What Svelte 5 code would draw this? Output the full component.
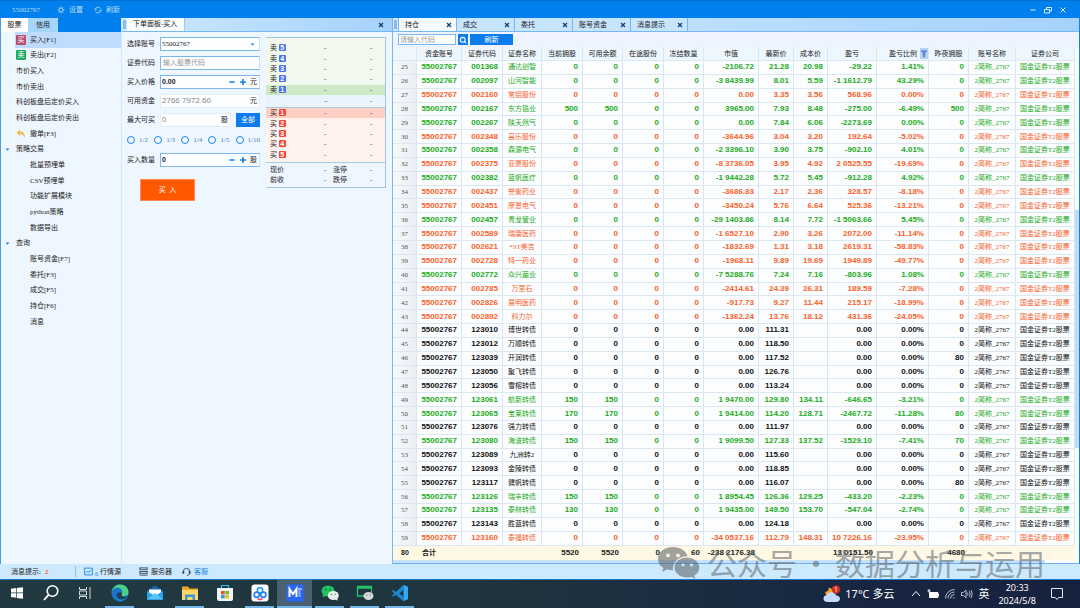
<script lang="ts">
	const account = '55002767';

	// sidebar tree; group = expandable heading, child = indented entry
	const menu = [
		{ text: '买入[F1]', badge: '买', kind: 'red', active: true },
		{ text: '卖出[F2]', badge: '卖', kind: 'green' },
		{ text: '市价买入' },
		{ text: '市价卖出' },
		{ text: '科创板盘后定价买入' },
		{ text: '科创板盘后定价卖出' },
		{ text: '撤单[F3]', undo: true },
		{ text: '策略交易', group: true },
		{ text: '批量预埋单', child: true },
		{ text: 'CSV预埋单', child: true },
		{ text: '功能扩展模块', child: true },
		{ text: 'python策略', child: true },
		{ text: '数据导出', child: true },
		{ text: '查询', group: true },
		{ text: '账号资金[F7]', child: true },
		{ text: '委托[F3]', child: true },
		{ text: '成交[F5]', child: true },
		{ text: '持仓[F6]', child: true },
		{ text: '消息', child: true },
	];

	const tabs = ['持仓', '成交', '委托', '账号资金', '消息提示'];
	const ratios = ['1/2', '1/3', '1/4', '1/5', '1/10'];
	const asks = [5, 4, 3, 2, 1];
	const bids = [1, 2, 3, 4, 5];

	const columns = [
		{ name: '', w: 24 },
		{ name: '资金账号', w: 45 },
		{ name: '证券代码', w: 41 },
		{ name: '证券名称', w: 39 },
		{ name: '当前拥股', w: 41 },
		{ name: '可用余额', w: 40 },
		{ name: '在途股份', w: 41 },
		{ name: '冻结数量', w: 40 },
		{ name: '市值', w: 55 },
		{ name: '最新价', w: 35 },
		{ name: '成本价', w: 34 },
		{ name: '盈亏', w: 49 },
		{ name: '盈亏比例', w: 52, filter: true },
		{ name: '昨夜拥股', w: 40 },
		{ name: '账号名称', w: 47 },
		{ name: '证券公司', w: 59 },
	];
	const totalWidth = columns.reduce((s, c) => s + c.w, 0);

	// colour (g/r/k), code, name, shares, market value, last, cost, profit, ratio, overnight
	const holdings = [
		['g', '001368', '通达创智', '0', '-2106.72', '21.28', '20.98', '-29.22', '1.41%', '0'],
		['g', '002097', '山河智能', '0', '-3 8439.99', '8.01', '5.59', '-1 1612.79', '43.29%', '0'],
		['r', '002160', '常铝股份', '0', '0.00', '3.35', '3.56', '568.96', '0.00%', '0'],
		['g', '002167', '东方锆业', '500', '3965.00', '7.93', '8.48', '-275.00', '-6.49%', '500'],
		['g', '002267', '陕天然气', '0', '0.00', '7.84', '6.06', '-2273.69', '0.00%', '0'],
		['r', '002348', '高乐股份', '0', '-3644.96', '3.04', '3.20', '192.64', '-5.02%', '0'],
		['g', '002358', '森源电气', '0', '-2 3396.10', '3.90', '3.75', '-902.10', '4.01%', '0'],
		['r', '002375', '亚厦股份', '0', '-8 3736.05', '3.95', '4.92', '2 0525.55', '-19.69%', '0'],
		['g', '002382', '蓝帆医疗', '0', '-1 9442.28', '5.72', '5.45', '-912.28', '4.92%', '0'],
		['r', '002437', '誉衡药业', '0', '-3686.83', '2.17', '2.36', '328.57', '-8.18%', '0'],
		['r', '002451', '摩恩电气', '0', '-3450.24', '5.76', '6.64', '525.36', '-13.21%', '0'],
		['g', '002457', '青龙管业', '0', '-29 1403.86', '8.14', '7.72', '-1 5063.66', '5.45%', '0'],
		['r', '002589', '瑞康医药', '0', '-1 6527.10', '2.90', '3.26', '2072.00', '-11.14%', '0'],
		['r', '002621', '*ST美吉', '0', '-1832.69', '1.31', '3.18', '2619.31', '-58.83%', '0'],
		['r', '002728', '特一药业', '0', '-1968.11', '9.89', '19.69', '1949.89', '-49.77%', '0'],
		['g', '002772', '众兴菌业', '0', '-7 5288.76', '7.24', '7.16', '-803.96', '1.08%', '0'],
		['r', '002785', '万里石', '0', '-2414.61', '24.39', '26.31', '189.59', '-7.28%', '0'],
		['r', '002826', '易明医药', '0', '-917.73', '9.27', '11.44', '215.17', '-18.99%', '0'],
		['r', '002892', '科力尔', '0', '-1362.24', '13.76', '18.12', '431.36', '-24.05%', '0'],
		['k', '123010', '博世转债', '0', '0.00', '111.31', '', '0.00', '0.00%', '0'],
		['k', '123012', '万顺转债', '0', '0.00', '118.50', '', '0.00', '0.00%', '0'],
		['k', '123039', '开润转债', '0', '0.00', '117.52', '', '0.00', '0.00%', '80'],
		['k', '123050', '聚飞转债', '0', '0.00', '126.76', '', '0.00', '0.00%', '0'],
		['k', '123056', '雪榕转债', '0', '0.00', '113.24', '', '0.00', '0.00%', '0'],
		['g', '123061', '航新转债', '150', '1 9470.00', '129.80', '134.11', '-646.65', '-3.21%', '0'],
		['g', '123065', '宝莱转债', '170', '1 9414.00', '114.20', '128.71', '-2467.72', '-11.28%', '80'],
		['k', '123076', '强力转债', '0', '0.00', '111.97', '', '0.00', '0.00%', '0'],
		['g', '123080', '海波转债', '150', '1 9099.50', '127.33', '137.52', '-1529.10', '-7.41%', '70'],
		['k', '123089', '九洲转2', '0', '0.00', '115.60', '', '0.00', '0.00%', '0'],
		['k', '123093', '金陵转债', '0', '0.00', '118.85', '', '0.00', '0.00%', '0'],
		['k', '123117', '健帆转债', '0', '0.00', '116.07', '', '0.00', '0.00%', '80'],
		['g', '123126', '瑞丰转债', '150', '1 8954.45', '126.36', '129.25', '-433.20', '-2.23%', '0'],
		['g', '123135', '泰林转债', '130', '1 9435.00', '149.50', '153.70', '-547.04', '-2.74%', '0'],
		['k', '123143', '胜蓝转债', '0', '0.00', '124.18', '', '0.00', '0.00%', '0'],
		['r', '123160', '泰福转债', '0', '-34 0537.16', '112.79', '148.31', '10 7226.16', '-23.95%', '0'],
	];
	const firstRow = 25;
</script>

{#snippet stepper(id, value, unit)}
	<div class="field">
		<input {id} class="strong" type="text" {value} />
		<button type="button" class="step" aria-label="减少"><svg viewBox="0 0 8 8"><path d="M1.5 4h5" /></svg></button>
		<button type="button" class="step" aria-label="增加"><svg viewBox="0 0 8 8"><path d="M1 4h6M4 1v6" /></svg></button>
		<span class="unit">{unit}</span>
	</div>
{/snippet}

<div class="screen">
	<header class="titlebar">
		<span class="user">{account}</span>
		<button class="tool">
			<svg viewBox="0 0 12 12"><circle cx="6" cy="6" r="3" /><path d="M6 0.8v2M6 9.2v2M0.8 6h2M9.2 6h2M2.3 2.3l1.5 1.5M8.2 8.2l1.5 1.5M9.7 2.3L8.2 3.8M3.8 8.2L2.3 9.7" /></svg>
			设置
		</button>
		<button class="tool">
			<svg viewBox="0 0 12 12"><path d="M2 5a4.3 4.3 0 0 1 8-1M10 7a4.3 4.3 0 0 1-8 1M0 6.3L2 4.5l2 1.8M12 5.700L10 7.500 8 5.700" /></svg>
			刷新
		</button>
		<div class="window-controls">
			<button aria-label="最小化"><svg viewBox="0 0 8 8"><path d="M1.5 4h5" /></svg></button>
			<button aria-label="还原"><svg viewBox="0 0 8 8"><path d="M0.5 3.5h5v3.5h-5zM2.5 3.5v-2h5v3.5h-2" /></svg></button>
			<button aria-label="关闭"><svg viewBox="0 0 8 8"><path d="M1.5 1.5l5 5M6.5 1.5l-5 5" /></svg></button>
		</div>
	</header>

	<main class="workspace">
		<nav class="sidebar">
			<div class="side-tabs">
				<button class="side-tab on">股票</button>
				<button class="side-tab">信用</button>
			</div>
			<ul class="tree">
				{#each menu as item}
					<li class:active={item.active} class:child={item.child} class:group={item.group}>
						{#if item.group}
							<svg class="caret" viewBox="0 0 6 4"><path d="M0.5 0.5h5L3 3.5z" /></svg>
						{/if}
						<a href="#menu">
							{#if item.badge}<span class="badge {item.kind}">{item.badge}</span>{/if}
							{#if item.undo}
								<svg class="undo" viewBox="0 0 10 10"><path d="M0.5 3.5L4 0.5v2c4 0 5.5 3 4.5 6.5C8 6.5 6.5 5 4 5v2z" /></svg>
							{/if}
							{item.text}
						</a>
					</li>
				{/each}
			</ul>
		</nav>

		<section class="order">
			<div class="strip">
				<span class="grip"></span>
				<span class="order-tab">下单面板-买入</span>
				<button class="close" aria-label="关闭面板"><svg viewBox="0 0 6 6"><path d="M1 1l4 4M5 1L1 5" /></svg></button>
			</div>
			<div class="order-body">
				<form class="form" onsubmit={(e) => e.preventDefault()}>
					<div class="row">
						<label for="acct">选择账号</label>
						<div class="field">
							<select id="acct"><option>{account}</option></select>
							<svg class="caret" viewBox="0 0 6 4"><path d="M0.5 0.5h5L3 3.5z" /></svg>
						</div>
					</div>
					<div class="row">
						<label for="code">证券代码</label>
						<div class="field"><input id="code" type="text" placeholder="输入股票代码" /></div>
					</div>
					<div class="row">
						<label for="price">买入价格</label>
						{@render stepper('price', '0.00', '元')}
					</div>
					<div class="row">
						<label for="cash">可用资金</label>
						<div class="field plain"><input id="cash" class="cash" type="text" value="2766 7972.60" readonly /><span class="unit">元</span></div>
					</div>
					<div class="row">
						<label for="max">最大可买</label>
						<div class="field plain"><input id="max" class="cash" type="text" value="0" readonly /><span class="unit">股</span></div>
						<button type="button" class="all">全部</button>
					</div>
					<div class="ratios">
						{#each ratios as r}
							<label><input type="radio" name="ratio" value={r} />{r}</label>
						{/each}
					</div>
					<div class="row">
						<label for="qty">买入数量</label>
						{@render stepper('qty', '0', '股')}
					</div>
					<button class="buy" type="submit">买 &nbsp;入</button>
				</form>

				<table class="depth">
					<tbody class="asks">
						{#each asks as n}
							<tr class:best={n === 1}><td>卖 <b>{n}</b></td><td>-</td><td></td><td>-</td></tr>
						{/each}
					</tbody>
					<tbody class="last">
						<tr><td></td><td>–</td><td></td><td>-</td></tr>
					</tbody>
					<tbody class="bids">
						{#each bids as n}
							<tr class:best={n === 1}><td>买 <b>{n}</b></td><td>-</td><td></td><td>-</td></tr>
						{/each}
					</tbody>
					<tbody class="quote">
						<tr><td>现价</td><td>-</td><td>涨停</td><td>-</td></tr>
						<tr><td>前收</td><td>-</td><td>跌停</td><td>-</td></tr>
					</tbody>
				</table>
			</div>
		</section>

		<section class="positions">
			<div class="strip">
				<span class="grip"></span>
				{#each tabs as tab, i}
					<div class="tab" class:on={i === 0}>
						<button>{tab}</button>
						<button class="close" aria-label="关闭{tab}"><svg viewBox="0 0 6 6"><path d="M1 1l4 4M5 1L1 5" /></svg></button>
					</div>
				{/each}
			</div>
			<div class="toolbar">
				<input type="text" placeholder="请输入代码" aria-label="代码" />
				<button class="search" aria-label="搜索"><svg viewBox="0 0 10 10"><circle cx="4.7" cy="4.7" r="3" /><path d="M7 7l2 2" /></svg></button>
				<button class="refresh">刷新</button>
			</div>
			<div class="grid-area">
				<table class="grid">
					<colgroup>
						{#each columns as col}
							<col style="width: {(col.w / totalWidth) * 100}%" />
						{/each}
					</colgroup>
					<thead>
						<tr>
							{#each columns as col}
								<th>
									{#if col.filter}
										<span class="filtered">{col.name}<svg viewBox="0 0 9 12"><path d="M1.5 3h6L5.3 6v4L3.7 9V6z" /></svg></span>
									{:else}
										{col.name}
									{/if}
								</th>
							{/each}
						</tr>
					</thead>
					<tbody>
						{#each holdings as [tone, code, name, shares, value, last, cost, profit, ratio, night], i}
							<tr class={tone}>
								<td class="idx">{firstRow + i}</td>
								<td class="num">{account}</td>
								<td class="num">{code}</td>
								<td>{name}</td>
								<td class="num">{shares}</td>
								<td class="num">{shares}</td>
								<td class="num">0</td>
								<td class="num">0</td>
								<td class="num">{value}</td>
								<td class="num">{last}</td>
								<td class="num">{cost}</td>
								<td class="num">{profit}</td>
								<td class="num">{ratio}</td>
								<td class="num">{night}</td>
								<td>2简称_2767</td>
								<td>国金证券T2股票</td>
							</tr>
						{/each}
					</tbody>
					<tfoot>
						<tr>
							<td class="sum-idx">80</td>
							<td class="sum-name">合计</td>
							<td></td>
							<td></td>
							<td class="num">5520</td>
							<td class="num">5520</td>
							<td class="num">0</td>
							<td class="num">60</td>
							<td class="num">-238 2176.38</td>
							<td></td>
							<td></td>
							<td class="num">13 0151.50</td>
							<td></td>
							<td class="num">4680</td>
							<td></td>
							<td></td>
						</tr>
					</tfoot>
				</table>
				<div class="vbar"><span></span></div>
			</div>
			<div class="hbar"><span></span></div>
		</section>
	</main>

	<footer class="status">
		<span class="notice">消息提示: <em>2</em></span>
		<span class="sep"></span>
		<span class="item source">
			<svg viewBox="0 0 10 10"><path class="blue" d="M0.7 1.2h8.6v7.6H0.7zM2 6.500l2-2 1.500 1.500L8.300 3" /></svg>
			<sub>6</sub>行情源
		</span>
		<span class="item server">
			<svg viewBox="0 0 10 10"><path d="M0.5 1h9M0.5 3h9M0.5 5h9M0.5 7h9M0.5 9h9M1 1v2M9 1v2M1 5v2M9 5v2" /></svg>
			服务器
		</span>
		<a class="item help" href="#help">
			<svg viewBox="0 0 10 10"><path d="M1.5 6.5V5a3.5 3.5 0 0 1 7 0v1.5M8.5 7.5Q8 9.3 5.5 9.3" /><path class="ear" d="M1.5 4.5v3M8.5 4.5v3" /></svg>
			客服
		</a>
	</footer>

	<div class="watermark">
		<svg viewBox="0 0 44 34">
			<path fill-rule="evenodd" d="M16 2C7 2 1 7.5 1 14c0 4 2 7 5.5 9L5 27l5-2.5c2 .6 4 .8 6 .7-1-8 6-14 14.5-14C29 5.5 23 2 16 2zM11 8.5a1.900 1.900 0 1 1 0 3.800 1.900 1.900 0 0 1 0-3.800zM21 8.500a1.900 1.900 0 1 1 0 3.800 1.900 1.900 0 0 1 0-3.800z" />
			<path fill-rule="evenodd" d="M30 12.5c-7 0-12.5 4.5-12.5 10S23 32.5 30 32.5c1.5 0 3-.2 4.3-.6l4.200 2.100-1.200-3.500c3-1.800 5-4.700 5-8 0-5.500-5.500-10-12.300-10zM26 18.200a1.600 1.600 0 1 1 0 3.200 1.600 1.600 0 0 1 0-3.200zM34.500 18.200a1.600 1.600 0 1 1 0 3.200 1.600 1.600 0 0 1 0-3.200z" />
		</svg>
		<span>公众号</span><span class="dot">·</span><span>数据分析与运用</span>
	</div>

	<div class="taskbar">
		<div class="apps">
			<button class="system" aria-label="开始"><svg viewBox="0 0 18 18"><path fill="#fff" d="M3 4.8l5-.7v4.5H3zM8.7 4L15 3.2v5.4H8.700zM3 9.300h5v4.500l-5-.7zM8.700 9.300H15v5.500L8.700 14z" /></svg></button>
			<button class="system" aria-label="搜索"><svg viewBox="0 0 18 18"><circle cx="10.5" cy="7" r="5.3" fill="none" stroke="#fff" stroke-width="1.6" /><path d="M6.6 10.8L2 16" stroke="#fff" stroke-width="1.8" /></svg></button>
			<button class="system" aria-label="任务视图"><svg viewBox="0 0 18 18"><path d="M3.5 3v2.5h7V3M3.5 15v-2.5h7V15M3.5 7h7v4h-7zM14 3v2M14 7v8M13 6h2" fill="none" stroke="#d5dadd" /></svg></button>
			<button class="run" aria-label="Edge">
				<svg viewBox="0 0 18 18"><circle cx="9" cy="9" r="8.5" fill="#1688d5" /><path d="M.6 8C1.5 3 5 .5 9 .5c5 0 8.5 3.5 8.5 7.5 0 3-2.5 4.5-5 4.5-1.5 0-2.5-.6-2-1.3C12 8.5 10 5.5 6.5 5.5 3.5 5.5 1.5 6.5.6 8z" fill="#4bd087" /><path d="M.6 8C2 4 5 3.5 7 3.7 10.5 4 12 7 11 9.5c-1-2-5-2-5.5 1.5-.4 3 2 6 5.5 6.2C5 18.5.5 14 .6 8z" fill="#1a75c8" /><path d="M5.5 11c.5-3.500 4.500-3.500 5.500-1.500-.8 1.500-.3 3 1.500 3 1.600 0 3-.5 3.700-1.100-1.500 5-9.700 6-10.700-.4z" fill="#203e58" /></svg>
			</button>
			<button aria-label="邮件"><svg viewBox="0 0 18 18"><path fill="#1268b3" d="M1 7l8-5.5L17 7v8.5H1z" /><path fill="#fff" d="M3 5.5h12v6H3z" /><path fill="#2aa4ec" d="M1 7l8 5 8-5v8.5H1z" /><path fill="#56c5fa" d="M1 15.5L9 9l8 6.5z" /></svg></button>
			<button class="run" aria-label="文件"><svg viewBox="0 0 18 18"><path fill="#e8a826" d="M1 2.5h6l1.5 2H17V16H1z" /><path fill="#ffd766" d="M1 6h16v10H1z" /><path fill="#3c95dd" d="M4 16v-5.5h10V16h-2.5v-3h-5v3z" /></svg></button>
			<button aria-label="商店"><svg viewBox="0 0 18 18"><path d="M5.5 5V1.5h7V5" fill="none" stroke="#3dbaf0" stroke-width="1.2" /><path fill="#f3f5f6" d="M1 4h16v11q0 2-2 2H3q-2 0-2-2z" /><path fill="#e8522d" d="M5 7h3.7v3.4H5z" /><path fill="#72b92c" d="M9.3 7H13v3.4H9.3z" /><path fill="#2c9be0" d="M5 11h3.7v3.4H5z" /><path fill="#f7ba20" d="M9.3 11H13v3.4H9.3z" /></svg></button>
			<button class="run" aria-label="网盘"><svg viewBox="0 0 18 18"><rect x="0.5" y="0.5" width="17" height="17" rx="3" fill="#fff" /><g fill="none" stroke-width="1.7"><circle cx="9" cy="6.3" r="2.7" stroke="#2b9df4" /><circle cx="5.7" cy="10.8" r="2.6" stroke="#2583f0" /><circle cx="12.3" cy="10.8" r="2.6" stroke="#2583f0" /><path d="M6.5 14.700L9 15.500l2.500-.8" stroke="#f04c64" /></g></svg></button>
			<button class="run front" aria-label="MT"><svg viewBox="0 0 18 18"><rect x="0.5" y="0.5" width="17" height="17" rx="1" fill="#2b66f4" /><path d="M3.5 13V5l3.500 5 3.500-5v8" fill="none" stroke="#fff" stroke-width="2" /><path d="M11 5h5M13.5 5v8" stroke="#8db3fb" stroke-width="1.8" /></svg></button>
			<button class="run" aria-label="微信"><svg viewBox="0 0 18 18"><ellipse cx="7" cy="7" rx="6.5" ry="5.5" fill="#20c55f" /><path d="M2 10l-.5 3L5 12z" fill="#20c55f" /><ellipse cx="12.3" cy="11.5" rx="5.5" ry="4.6" fill="#e9ecec" /><path d="M14 15l2.5 1.700V14z" fill="#e9ecec" /><g fill="#185d36"><circle cx="4.8" cy="5.5" r=".8" /><circle cx="9" cy="5.5" r=".8" /><circle cx="10.5" cy="10.3" r=".6" /><circle cx="14" cy="10.3" r=".6" /></g></svg></button>
			<button class="run" aria-label="小程序"><svg viewBox="0 0 18 18"><path d="M1.5 2.5h14V12h-14zM1 4h15" fill="none" stroke="#25c268" stroke-width="1.3" /><ellipse cx="12.5" cy="12" rx="5" ry="4" fill="#d6dadb" /><g fill="#69777c"><circle cx="10.7" cy="11" r=".7" /><circle cx="14.2" cy="11" r=".7" /></g></svg></button>
			<button class="run" aria-label="VS Code"><svg viewBox="0 0 18 18"><path fill="#1b87d2" d="M12.5.8L4.8 8 2.2 6 .8 7l2.7 2.4L.8 11.7l1.4 1 2.6-2 7.7 6.5V12.5L8.2 9.400l4.300-3.300z" /><path fill="#35a9f1" d="M12.5.8l4.5 2v12.5l-4.5 2z" /></svg></button>
		</div>
		<div class="tray">
			<div class="forecast">
				<svg viewBox="0 0 18 18"><path fill="#f5a623" d="M2 7l3-1 1-3.5L9 4l4-1-1 8-8 2z" /><path fill="#c3dbff" d="M4.5 17C2 17 .5 15.5.5 13.5S2 10.3 4 10.3C4.7 8 6.5 7 8.5 7c2.600 0 4 1.500 4.500 3.500 2.500 0 4 1.300 4 3.200S15.500 17 13 17z" /><circle cx="13" cy="4.5" r="4.2" fill="#d52e22" /><text x="13" y="7" text-anchor="middle">1</text></svg>
				<span>17°C 多云</span>
			</div>
			<svg class="ico" viewBox="0 0 12 12"><path d="M2 8l4-4.5L10 8" /></svg>
			<svg class="ico" viewBox="0 0 12 12"><path d="M2.5 4.5h8.5v5H2.5z" fill="#fff" /><path d="M2 1v3.5M0.5 3h3M11.5 6v2" /></svg>
			<svg class="ico dim" viewBox="0 0 12 12"><path d="M1.5 10.5A9 9 0 0 1 10.5 1.5M4 10.5A6.5 6.5 0 0 1 10.5 4M6.5 10.5A4 4 0 0 1 10.5 6.5M9 10.5l1.500-1.500" /></svg>
			<svg class="ico dim" viewBox="0 0 12 12"><path d="M0.5 4.5h2L5 2v8L2.5 7.5h-2zM6.5 4.5q1 1.500 0 3M8.300 3.200q1.800 2.800 0 5.600M10 2q2.500 4 0 8" /></svg>
			<span class="ime">英</span>
			<div class="clock"><span>20:33</span><span>2024/5/8</span></div>
			<svg class="notes" viewBox="0 0 14 14"><path d="M1.5 1.5h11v9H8.7L7 12.5l-1.7-2H1.5z" /></svg>
		</div>
	</div>
</div>

<style>
	:global(body) {
		margin: 0;
	}

	.screen {
		position: relative;
		display: grid;
		grid-template-rows: 18px minmax(0, 1fr) 16px 28px;
		height: 100vh;
		overflow: hidden;
		background: #eef6ff;
		color: #222;
		font-family: "Liberation Serif", "Noto Sans CJK SC", sans-serif;
		font-size: 7px;
		line-height: 10px;
	}

	button, input, select {
		font: inherit;
		color: inherit;
		margin: 0;
		padding: 0;
		border: 0;
		background: none;
		border-radius: 0;
		outline: none;
		box-sizing: border-box;
		min-width: 0;
	}

	a {
		color: inherit;
		text-decoration: none;
	}

	svg {
		display: block;
		fill: none;
		flex: none;
	}

	/* title bar */
	.titlebar {
		display: flex;
		align-items: center;
		gap: 11px;
		padding: 0 13px 0 12px;
		background: #0080ec;
		border-top: 1px solid #0070d0;
		box-sizing: border-box;
		color: #b9defc;
	}
	.user { margin-right: 6px; }
	.tool {
		display: flex;
		align-items: center;
		gap: 4px;
	}
	.tool svg {
		width: 8px;
		height: 8px;
		stroke: #b9defc;
		stroke-width: 1.3;
	}
	.window-controls {
		display: flex;
		gap: 7px;
		margin-left: auto;
	}
	.window-controls svg {
		width: 8px;
		height: 8px;
		stroke: #d8edff;
	}

	/* three panes */
	.workspace {
		display: grid;
		grid-template-columns: 121px 271px minmax(0, 1fr);
		min-height: 0;
		border-left: 1px solid #4d9be6;
		border-right: 1px solid #1683de;
	}

	.sidebar {
		display: flex;
		flex-direction: column;
		border-right: 1px solid #d0e8fb;
		min-height: 0;
	}
	.side-tabs {
		display: flex;
		height: 14px;
		background: #0080ec;
	}
	.side-tab {
		width: 30px;
		background: #a6d5fc;
	}
	.side-tab.on {
		width: 27px;
		background: #fff;
	}
	.tree {
		display: grid;
		grid-auto-rows: minmax(0, 1fr);
		height: 54.5%;
		margin: 0;
		padding: 0;
		list-style: none;
	}
	.tree li {
		display: flex;
		align-items: center;
		margin-left: 14px;
		padding-left: 1px;
	}
	.tree li.child { padding-left: 15px; }
	.tree li.group {
		margin-left: 4px;
		padding-left: 0;
		gap: 6px;
	}
	.tree li.active { background: #bfdcff; }
	.tree a {
		display: flex;
		align-items: center;
		gap: 4px;
		white-space: nowrap;
	}
	.caret {
		width: 5px;
		height: 3px;
		fill: #0f7fe8;
	}
	.badge {
		width: 10px;
		line-height: 10px;
		border-radius: 1px;
		color: #fff;
		text-align: center;
	}
	.badge.red { background: #b5506c; }
	.badge.green { background: #1aab62; }
	.undo {
		width: 10px;
		height: 10px;
		fill: #ecc050;
	}

	/* shared tab strip */
	.strip {
		display: flex;
		height: 14px;
		box-sizing: border-box;
		background: linear-gradient(90deg, #cfe9ff, #a5d2fd);
		border-bottom: 1px solid #76b8f5;
	}
	.grip {
		width: 3px;
		margin: 2px 1px;
		background: #86bdef;
	}
	.close svg {
		width: 6px;
		height: 6px;
		stroke: #123f78;
		stroke-width: 1.3;
	}

	.order {
		border-right: 1px solid #76b8f5;
		min-width: 0;
	}
	.order-tab {
		padding: 1px 7px 0 6px;
		background: #f8fcff;
		border-right: 1px solid #9fcbf0;
		white-space: nowrap;
	}
	.order .close {
		margin-left: auto;
		padding-right: 8px;
	}
	.order-body {
		display: grid;
		grid-template-columns: 133px 120px;
		gap: 6px;
		align-items: start;
		padding: 5px 5px 0;
	}
	.form {
		display: grid;
		gap: 5px;
	}
	.row {
		display: flex;
		align-items: center;
		gap: 5px;
		height: 14px;
	}
	.row label {
		width: 28px;
		flex: none;
		white-space: nowrap;
	}
	.field {
		position: relative;
		display: flex;
		align-items: center;
		flex: 1;
		height: 14px;
		box-sizing: border-box;
		background: #fcfeff;
		border: 1px solid #7db7f0;
		border-right-color: #c9e0f5;
		min-width: 0;
	}
	.field.plain { border-color: #e3eef6; }
	.field input, .field select {
		flex: 1;
		width: 100%;
		padding-left: 1px;
		appearance: none;
	}
	.field input::placeholder {
		color: #999;
		padding-left: 1px;
	}
	.field .caret {
		position: absolute;
		right: 4px;
		pointer-events: none;
	}
	.field .strong, .field .cash {
		font-family: "Liberation Sans", sans-serif;
	}
	.field .strong { font-weight: bold; }
	.plain input { color: #888; }
	.field .cash { font-size: 8px; }
	.step { margin-right: 3px; }
	.step svg {
		width: 8px;
		height: 8px;
		stroke: #0f7fe8;
		stroke-width: 1.6;
	}
	.unit { padding-right: 2px; }
	.all {
		width: 24px;
		height: 14px;
		background: #0b7cec;
		color: #fff;
	}
	.ratios {
		display: flex;
		align-items: center;
		justify-content: space-between;
		height: 16px;
		color: #4c86b8;
	}
	.ratios label {
		display: flex;
		align-items: center;
		gap: 4px;
	}
	.ratios input {
		width: 8px;
		height: 8px;
		appearance: none;
		border: 1px solid #1f86e6;
		border-radius: 50%;
	}
	.buy {
		justify-self: start;
		width: 55px;
		height: 22px;
		margin: 7px 0 0 13px;
		background: #ff5800;
		border: 1px solid #ff8b52;
		color: #fff;
	}

	/* five-level depth */
	.depth {
		display: block;
		box-sizing: border-box;
		border: 1px solid #9dc5e3;
		border-left: 0;
	}
	.depth tbody { display: grid; }
	.depth tr {
		display: grid;
		grid-template-columns: 54px 9px 37px 1fr;
		align-items: center;
		padding-left: 4px;
	}
	.depth td { padding: 0; }
	.depth b {
		display: inline-block;
		width: 7px;
		line-height: 7px;
		border-radius: 1px;
		color: #fff;
		font-family: "Liberation Sans", sans-serif;
		text-align: center;
	}
	.asks, .bids { grid-template-rows: repeat(5, 1fr); }
	.asks {
		height: 52px;
		padding-top: 5px;
		background: #f1f9ee;
	}
	.asks b { background: #4f74f5; }
	.asks .best { background: #cde9c5; }
	.last {
		height: 12px;
		background: #e9f4fc;
	}
	.bids {
		height: 52px;
		padding-bottom: 2px;
		background: #fff1ec;
		border-top: 1px solid #a5cde5;
		border-bottom: 1px solid #a5cde5;
	}
	.bids b { background: #f74838; }
	.bids .best { background: #ffcfc3; }
	.quote { padding: 2px 0; }

	/* positions */
	.positions {
		display: flex;
		flex-direction: column;
		min-width: 0;
		min-height: 0;
		background: #fbfdff;
		border-bottom: 1px solid #6cb0f5;
	}
	.tab {
		display: flex;
		justify-content: space-between;
		align-items: center;
		width: 58px;
		box-sizing: border-box;
		padding: 0 4px 0 6px;
		background: #c8e5fe;
		border-left: 1px solid #76b8f5;
	}
	.tab:last-child { border-right: 1px solid #76b8f5; }
	.tab.on { background: #f5faff; }
	.toolbar {
		display: flex;
		gap: 2px;
		height: 15px;
		box-sizing: border-box;
		padding: 2px 5px;
		background: #eef3ff;
	}
	.toolbar input {
		width: 58px;
		padding-left: 1px;
		background: #fff;
		border: 1px solid #76b8f5;
	}
	.toolbar input::placeholder { color: #999; }
	.search {
		width: 10px;
		padding: 1px;
		background: #0b7cec;
	}
	.search svg {
		width: 8px;
		height: 8px;
		stroke: #fff;
		stroke-width: 1.3;
	}
	.refresh {
		width: 43px;
		background: #0b7cec;
		color: #fff;
	}

	.grid-area {
		display: flex;
		flex: 1;
		min-height: 0;
	}
	.grid {
		flex: 1;
		width: 100%;
		height: 100%;
		table-layout: fixed;
		border-collapse: separate;
		border-spacing: 0;
	}
	.grid th, .grid td {
		padding: 0;
		border-right: 1px solid #d9e5f1;
		border-bottom: 1px solid #dce7f2;
		text-align: center;
		white-space: nowrap;
		line-height: 10px;
	}
	.grid thead tr { height: 14px; }
	.grid th {
		background: #eef6fe;
		font-weight: normal;
	}
	.filtered {
		display: flex;
		align-items: center;
		justify-content: flex-end;
		gap: 3px;
	}
	.filtered svg {
		width: 8px;
		height: 11px;
		background: #b5d2f6;
		fill: #6f9fe0;
		stroke: #2a62ae;
		stroke-width: 0.7;
	}
	.grid td.idx {
		background: linear-gradient(90deg, #f6f9fb, #e9eff5);
		color: #555;
	}
	.grid td.num {
		padding-right: 4px;
		font-family: "Liberation Sans", sans-serif;
		font-size: 8px;
		font-weight: bold;
		text-align: right;
	}
	.g { color: #1bab1b; }
	.r { color: #f9612a; }
	.k { color: #111; }
	.grid tfoot tr { height: 14px; }
	.grid tfoot td {
		border: 0;
		background: #fff8e4;
	}
	.grid td.sum-idx {
		font-family: "Liberation Sans", sans-serif;
		font-weight: bold;
	}
	.grid td.sum-name {
		padding-left: 5px;
		font-weight: bold;
		text-align: left;
	}
	.vbar {
		flex: none;
		width: 4px;
		padding-top: 163px;
		box-sizing: border-box;
	}
	.vbar span {
		display: block;
		height: 68%;
		background: #bddcf8;
	}
	.hbar {
		height: 3px;
		background: #fff;
	}
	.hbar span {
		display: block;
		width: 95%;
		height: 3px;
		background: #c5e1fb;
	}

	/* status bar */
	.status {
		display: flex;
		align-items: center;
		padding-left: 11px;
		background: #cde9fe;
		border-bottom: 1px solid #1a7bd0;
		box-sizing: border-box;
	}
	.notice { width: 64px; }
	.notice em {
		margin-left: 2px;
		color: #ff5a1f;
		font-style: normal;
		font-weight: bold;
	}
	.sep {
		width: 1px;
		height: 11px;
		margin-right: 8px;
		background: #92c0e0;
	}
	.item {
		display: flex;
		align-items: center;
		gap: 3px;
	}
	.item svg {
		width: 9px;
		height: 9px;
		stroke: #34495c;
	}
	.item .blue { stroke: #1f86e6; }
	.ear { stroke-width: 2; }
	.source {
		width: 55px;
		gap: 2px;
	}
	.source sub {
		color: #1f86e6;
		font-size: 6px;
		line-height: 6px;
		align-self: flex-end;
	}
	.server { width: 43px; }
	.help { color: #1f86e6; }

	.watermark {
		position: absolute;
		right: 35px;
		bottom: 28px;
		display: flex;
		align-items: center;
		opacity: 0.55;
		color: #60686e;
		font-family: "Noto Sans CJK SC", sans-serif;
		font-size: 30px;
		line-height: 36px;
		pointer-events: none;
	}
	.watermark svg {
		width: 44px;
		height: 34px;
		margin-right: 6px;
		fill: #555c60;
	}
	.dot {
		width: 38px;
		text-align: center;
	}

	/* taskbar */
	.taskbar {
		position: relative;
		display: flex;
		justify-content: space-between;
		background: linear-gradient(90deg, #213a42, #1f343e 45%, #182642 80%, #16213d);
		color: #fff;
		font-family: "Noto Sans", "Noto Sans CJK SC", sans-serif;
	}
	.apps { display: flex; }
	.apps button {
		display: flex;
		align-items: center;
		justify-content: center;
		width: 35px;
		border-bottom: 2px solid transparent;
	}
	.apps svg {
		width: 18px;
		height: 18px;
	}
	.apps .system { width: 34px; }
	.apps .run {
		width: 29px;
		margin: 0 3px;
		border-bottom-color: #74b6ea;
	}
	.apps .front {
		width: 35px;
		margin: 0;
		background: #4a6270;
	}
	.tray {
		display: flex;
		align-items: center;
		gap: 5px;
		padding-right: 16px;
	}
	.forecast {
		display: flex;
		align-items: center;
		gap: 4px;
		margin-right: 11px;
		font-size: 11px;
		line-height: 14px;
	}
	.forecast svg {
		width: 18px;
		height: 18px;
	}
	.forecast text {
		fill: #fff;
		font-size: 7px;
	}
	.ico {
		width: 12px;
		height: 12px;
		stroke: #fff;
	}
	.dim { stroke: #b4bcc8; }
	.ime {
		font-size: 11px;
		line-height: 14px;
	}
	.clock {
		display: grid;
		margin: 0 9px 0 4px;
		font-size: 9px;
		line-height: 13px;
		text-align: center;
	}
	.notes {
		width: 14px;
		height: 14px;
		stroke: #e3e7ee;
	}
</style>
